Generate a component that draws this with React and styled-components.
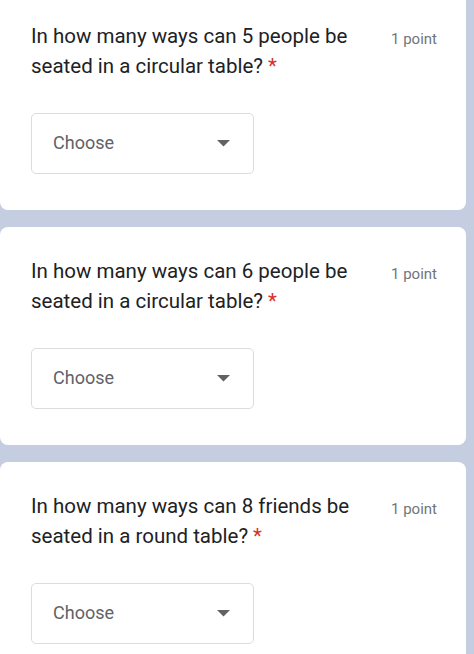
import React from "react";
import styled, { createGlobalStyle } from "styled-components";

const Global = createGlobalStyle`
  html, body { margin: 0; padding: 0; }
  body {
    background: #c4cee0;
    overflow: hidden;
    font-family: Roboto, "Liberation Sans", sans-serif;
  }
`;

const Page = styled.div`
  display: flex;
  flex-direction: column;
  gap: 17px;
  margin-top: -8px;
  width: 466px;
`;

const Card = styled.div`
  background: #fff;
  border-radius: 8px;
  height: 218px;
  box-sizing: border-box;
  padding: 29px 29px 0 31px;
`;

const Header = styled.div`
  display: flex;
  align-items: flex-start;
`;

const Title = styled.div`
  flex: 1;
  font-size: 20.5px;
  line-height: 30px;
  color: #202124;
  padding-right: 20px;
`;

const QuestionText = styled.span`
  margin-right: 5px;
`;

const Star = styled.span`
  color: #d93025;
`;

const Points = styled.div`
  font-size: 15px;
  line-height: 30px;
  padding-top: 3px;
  color: #70757a;
  white-space: nowrap;
`;

const Select = styled.div`
  margin-top: 32px;
  width: 223px;
  height: 61px;
  box-sizing: border-box;
  border: 1px solid #dadce0;
  border-radius: 5px;
  display: flex;
  align-items: center;
  padding: 0 23px 0 21px;
`;

const Placeholder = styled.span`
  flex: 1;
  font-size: 18px;
  line-height: 22px;
  padding-bottom: 1px;
  color: #5f6368;
`;

const Arrow = styled.svg`
  width: 13px;
  height: 7px;
  display: block;
`;

const questions = [
  "In how many ways can 5 people be seated in a circular table?",
  "In how many ways can 6 people be seated in a circular table?",
  "In how many ways can 8 friends be seated in a round table?",
];

export default function App() {
  return (
    <>
      <Global />
      <Page>
        {questions.map((q, i) => (
          <Card key={i}>
            <Header>
              <Title>
                <QuestionText>{q}</QuestionText>
                <Star>*</Star>
              </Title>
              <Points>1 point</Points>
            </Header>
            <Select>
              <Placeholder>Choose</Placeholder>
              <Arrow viewBox="0 0 13 7">
                <path d="M0 0 L13 0 L6.5 6.5 Z" fill="#5f6368" />
              </Arrow>
            </Select>
          </Card>
        ))}
      </Page>
    </>
  );
}
